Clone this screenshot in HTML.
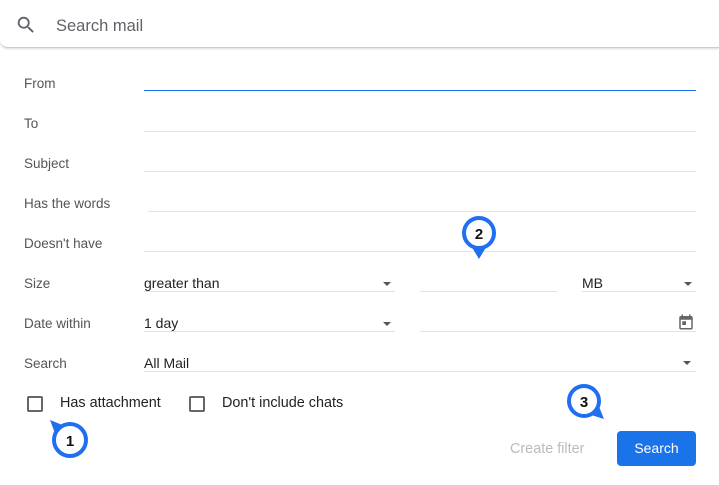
<!DOCTYPE html>
<html><head><meta charset="utf-8"><style>
body{margin:0;width:719px;height:485px;background:#fff;font-family:"Liberation Sans",Arial,sans-serif;position:relative;overflow:hidden}
.hdr{position:absolute;left:0;top:0;width:719px;height:47px;border-bottom:1px solid #ccc;border-radius:0 0 0 8px;box-shadow:0 1px 2px rgba(0,0,0,.15);background:#fff}
.hdr span{position:absolute;left:56px;top:17px;font-size:16.5px;color:#5f6368}
.lbl{position:absolute;left:24px;font-size:13.5px;color:#555}
.ln{position:absolute;height:1px;background:#e2e2e2}
.v{position:absolute;font-size:14px;color:#222}
.arr{position:absolute;width:0;height:0;border-left:4px solid transparent;border-right:4px solid transparent;border-top:4px solid #555}
.cb{position:absolute;width:12px;height:12px;border:2px solid #666;border-radius:2px}
.t{position:absolute;font-size:14.4px;color:#222}
</style></head><body>
<div class="hdr"><svg style="position:absolute;left:15px;top:14px" width="22" height="22" viewBox="0 0 24 24"><path fill="#5f6368" d="M15.5 14h-.79l-.28-.27A6.470 6.470 0 0 0 16 9.5 6.5 6.5 0 1 0 9.5 16c1.61 0 3.090-.59 4.230-1.57l.27.28v.79l5 4.99L20.49 19l-4.99-5zm-6 0C7.010 14 5 11.99 5 9.5S7.010 5 9.5 5 14 7.010 14 9.5 11.99 14 9.5 14z"/></svg><span>Search mail</span></div>

<div class="lbl" style="top:76px">From</div>
<div class="ln" style="left:144px;top:90px;width:552px;background:#1a73e8"></div>
<div class="lbl" style="top:116px">To</div>
<div class="ln" style="left:144px;top:131px;width:552px"></div>
<div class="lbl" style="top:156px">Subject</div>
<div class="ln" style="left:144px;top:171px;width:552px"></div>
<div class="lbl" style="top:196px">Has the words</div>
<div class="ln" style="left:148px;top:211px;width:548px"></div>
<div class="lbl" style="top:236px">Doesn't have</div>
<div class="ln" style="left:144px;top:251px;width:552px"></div>

<div class="lbl" style="top:276px">Size</div>
<div class="v" style="left:144px;top:275px">greater than</div><div class="arr" style="left:383px;top:282px"></div>
<div class="ln" style="left:144px;top:291px;width:251px"></div>
<div class="ln" style="left:420px;top:291px;width:137px"></div>
<div class="v" style="left:582px;top:275px">MB</div><div class="arr" style="left:684px;top:282px"></div>
<div class="ln" style="left:582px;top:291px;width:114px"></div>

<div class="lbl" style="top:316px">Date within</div>
<div class="v" style="left:144px;top:315px">1 day</div><div class="arr" style="left:383px;top:322px"></div>
<div class="ln" style="left:144px;top:331px;width:251px"></div>
<div class="ln" style="left:420px;top:331px;width:276px"></div>
<svg style="position:absolute;left:677px;top:313px" width="18" height="18" viewBox="0 0 24 24"><path fill="#666" d="M19 4h-1V2h-2v2H8V2H6v2H5c-1.1 0-2 .9-2 2v14c0 1.1.9 2 2 2h14c1.1 0 2-.9 2-2V6c0-1.1-.9-2-2-2zm0 16H5V9h14v11zM7 11h5v5H7z"/></svg>

<div class="lbl" style="top:356px">Search</div>
<div class="v" style="left:144px;top:355px">All Mail</div><div class="arr" style="left:683px;top:361px"></div>
<div class="ln" style="left:144px;top:371px;width:552px"></div>

<div class="cb" style="left:27px;top:396px"></div><div class="t" style="left:60px;top:395px">Has attachment</div>
<div class="cb" style="left:189px;top:396px"></div><div class="t" style="left:222px;top:395px">Don't include chats</div>

<div class="t" style="left:510px;top:441px;color:#bbb">Create filter</div>
<div style="position:absolute;left:617px;top:431px;width:79px;height:35px;background:#1a73e8;border-radius:4px;color:#fff;font-size:14px;text-align:center;line-height:35px">Search</div>

<svg style="position:absolute;left:0;top:0" width="719" height="485">
<g fill="#fff" stroke="#1f6ff0" stroke-width="4">
<path d="M470 244 L479 259 L488 244 Z" fill="#1f6ff0" stroke="none"/>
<circle cx="479" cy="233" r="15"/>
<path d="M50 420 L65 426 L56 436 Z" fill="#1f6ff0" stroke="none"/>
<circle cx="70" cy="440" r="16"/>
<path d="M604 419 L588 414 L598 404 Z" fill="#1f6ff0" stroke="none"/>
<circle cx="584" cy="401" r="15"/>
</g>
<g font-family="Liberation Sans,sans-serif" font-weight="bold" font-size="15" text-anchor="middle" fill="#111">
<text x="479" y="239">2</text><text x="70" y="446">1</text><text x="584" y="407">3</text></g>
</svg>
</body></html>
